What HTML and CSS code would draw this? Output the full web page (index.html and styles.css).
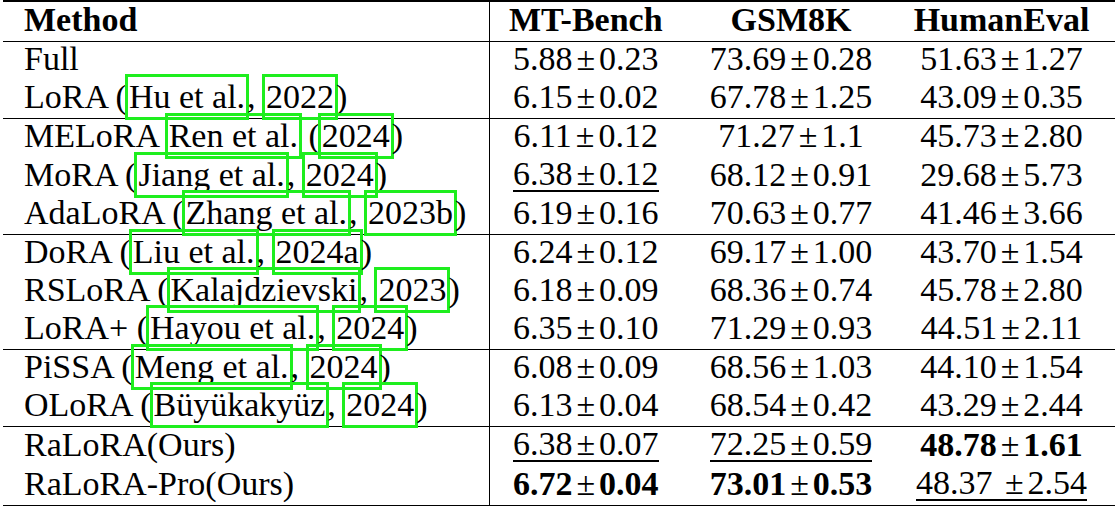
FILE: index.html
```html
<!DOCTYPE html>
<html>
<head>
<meta charset="utf-8">
<link rel="stylesheet" href="styles.css">
</head>
<body>
<table class="results">
  <colgroup>
    <col class="c-method">
    <col class="c-mt">
    <col class="c-gsm">
    <col class="c-he">
  </colgroup>
  <thead>
    <tr class="head">
      <th class="method">Method</th>
      <th class="num mt">MT-Bench</th>
      <th class="num gsm">GSM8K</th>
      <th class="num he">HumanEval</th>
    </tr>
  </thead>
  <tbody class="group">
    <tr>
      <td class="method">Full</td>
      <td class="num mt">5.88<span class="pm">±</span>0.23</td>
      <td class="num gsm">73.69<span class="pm">±</span>0.28</td>
      <td class="num he">51.63<span class="pm">±</span>1.27</td>
    </tr>
    <tr>
      <td class="method">LoRA (<span class="cite">Hu et al.</span>, <span class="cite">2022</span>)</td>
      <td class="num mt">6.15<span class="pm">±</span>0.02</td>
      <td class="num gsm">67.78<span class="pm">±</span>1.25</td>
      <td class="num he">43.09<span class="pm">±</span>0.35</td>
    </tr>
  </tbody>
  <tbody class="group">
    <tr>
      <td class="method">MELoRA <span class="cite">Ren et al.</span> (<span class="cite">2024</span>)</td>
      <td class="num mt">6.11<span class="pm">±</span>0.12</td>
      <td class="num gsm">71.27<span class="pm">±</span>1.1</td>
      <td class="num he">45.73<span class="pm">±</span>2.80</td>
    </tr>
    <tr>
      <td class="method">MoRA (<span class="cite">Jiang et al.</span>, <span class="cite">2024</span>)</td>
      <td class="num mt"><span class="second">6.38<span class="pm">±</span>0.12</span></td>
      <td class="num gsm">68.12<span class="pm">±</span>0.91</td>
      <td class="num he">29.68<span class="pm">±</span>5.73</td>
    </tr>
    <tr>
      <td class="method">AdaLoRA (<span class="cite">Zhang et al.</span>, <span class="cite">2023b</span>)</td>
      <td class="num mt">6.19<span class="pm">±</span>0.16</td>
      <td class="num gsm">70.63<span class="pm">±</span>0.77</td>
      <td class="num he">41.46<span class="pm">±</span>3.66</td>
    </tr>
  </tbody>
  <tbody class="group">
    <tr>
      <td class="method">DoRA (<span class="cite">Liu et al.</span>, <span class="cite">2024a</span>)</td>
      <td class="num mt">6.24<span class="pm">±</span>0.12</td>
      <td class="num gsm">69.17<span class="pm">±</span>1.00</td>
      <td class="num he">43.70<span class="pm">±</span>1.54</td>
    </tr>
    <tr>
      <td class="method">RSLoRA (<span class="cite">Kalajdzievski</span>, <span class="cite">2023</span>)</td>
      <td class="num mt">6.18<span class="pm">±</span>0.09</td>
      <td class="num gsm">68.36<span class="pm">±</span>0.74</td>
      <td class="num he">45.78<span class="pm">±</span>2.80</td>
    </tr>
    <tr>
      <td class="method">LoRA+ (<span class="cite">Hayou et al.</span>, <span class="cite">2024</span>)</td>
      <td class="num mt">6.35<span class="pm">±</span>0.10</td>
      <td class="num gsm">71.29<span class="pm">±</span>0.93</td>
      <td class="num he">44.51<span class="pm">±</span>2.11</td>
    </tr>
  </tbody>
  <tbody class="group">
    <tr>
      <td class="method">PiSSA (<span class="cite">Meng et al.</span>, <span class="cite">2024</span>)</td>
      <td class="num mt">6.08<span class="pm">±</span>0.09</td>
      <td class="num gsm">68.56<span class="pm">±</span>1.03</td>
      <td class="num he">44.10<span class="pm">±</span>1.54</td>
    </tr>
    <tr>
      <td class="method">OLoRA (<span class="cite">Büyükakyüz</span>, <span class="cite">2024</span>)</td>
      <td class="num mt">6.13<span class="pm">±</span>0.04</td>
      <td class="num gsm">68.54<span class="pm">±</span>0.42</td>
      <td class="num he">43.29<span class="pm">±</span>2.44</td>
    </tr>
  </tbody>
  <tbody class="group">
    <tr>
      <td class="method">RaLoRA(Ours)</td>
      <td class="num mt"><span class="second">6.38<span class="pm">±</span>0.07</span></td>
      <td class="num gsm"><span class="second">72.25<span class="pm">±</span>0.59</span></td>
      <td class="num he"><b>48.78</b><span class="pm">±</span><b>1.61</b></td>
    </tr>
    <tr>
      <td class="method">RaLoRA-Pro(Ours)</td>
      <td class="num mt"><b>6.72</b><span class="pm">±</span><b>0.04</b></td>
      <td class="num gsm"><b>73.01</b><span class="pm">±</span><b>0.53</b></td>
      <td class="num he"><span class="second">48.37 <span class="pm">±</span>2.54</span></td>
    </tr>
  </tbody>
</table>
</body>
</html>
```
FILE: styles.css
```css
html, body {
  margin: 0;
  padding: 0;
  background: #ffffff;
}

body {
  font-family: "Liberation Serif", "Times New Roman", serif;
  font-size: 34px;
  color: #000000;
}

.results {
  margin: 0 0 0 3px;
  border-collapse: collapse;
  table-layout: fixed;
  width: 1112px;
  border-top: 2px solid #000;
  border-bottom: 2px solid #000;
}

.c-method { width: 486px; }
.c-mt { width: 193px; }
.c-gsm { width: 218px; }
.c-he { width: 215px; }

th, td {
  padding: 0 0 4px 0;
  line-height: 34px;
  height: 34px;
  white-space: nowrap;
  vertical-align: middle;
}

.head th {
  height: 35px;
  line-height: 35px;
  font-weight: bold;
}

.method {
  text-align: left;
  padding-left: 21px;
  border-right: 1px solid #000;
}

.num {
  text-align: center;
}

.he {
  padding-right: 12px;
}

.group {
  border-top: 1px solid #000;
}

.pm {
  font-weight: normal;
  padding: 0 4px;
}

.second {
  display: inline-block;
  line-height: 32px;
  border-bottom: 2px solid #000;
}

.cite {
  border: 3px solid #1eee1e;
  padding: 1px 1px 2px 1px;
  margin: 0 -2px;
}
```
